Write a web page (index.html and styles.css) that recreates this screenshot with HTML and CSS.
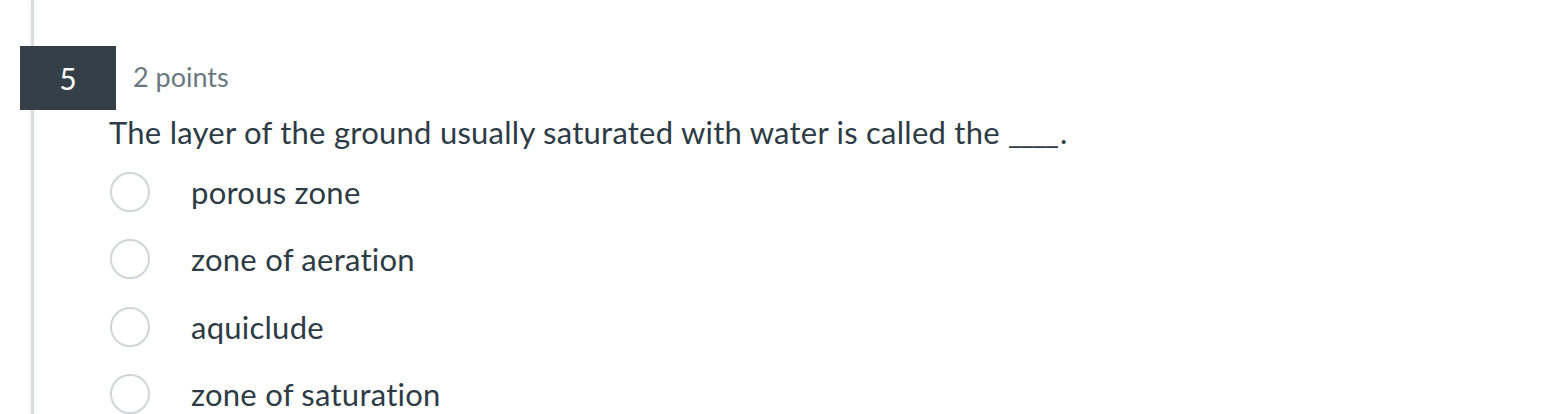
FILE: index.html
```html
<!DOCTYPE html>
<html lang="en">
<head>
<meta charset="utf-8">
<title>Quiz question 5</title>
<link rel="stylesheet" href="styles.css">
</head>
<body>
<div class="quiz">
  <div class="question">
    <div class="header">
      <div class="badge">5</div>
      <div class="points">2 points</div>
    </div>
    <div class="text">The layer of the ground usually saturated with water is called the <span class="blank">____</span>.</div>
    <ul class="answers">
      <li class="answer"><span class="radio"></span><span class="label">porous zone</span></li>
      <li class="answer"><span class="radio"></span><span class="label">zone of aeration</span></li>
      <li class="answer"><span class="radio"></span><span class="label">aquiclude</span></li>
      <li class="answer"><span class="radio"></span><span class="label">zone of saturation</span></li>
    </ul>
  </div>
</div>
</body>
</html>
```
FILE: styles.css
```css
html, body {
  margin: 0;
  padding: 0;
  background: #ffffff;
  height: 100%;
  overflow: hidden;
}
body {
  font-family: Lato, "Open Sans", sans-serif;
  color: #2d3b45;
  font-variant-ligatures: none;
}
.quiz {
  margin-left: 31px;
  border-left: 3px solid #d9dcdf;
  min-height: 414px;
  padding-top: 46px;
  box-sizing: border-box;
  box-shadow: -2px 0 3px rgba(0,0,0,0.04);
}
.header {
  display: flex;
  align-items: center;
  margin-left: -14px;
}
.badge {
  width: 96px;
  height: 64px;
  background: #343f48;
  color: #ffffff;
  font-size: 30px;
  display: flex;
  align-items: center;
  justify-content: center;
}
.points {
  padding-left: 17px;
  padding-bottom: 4px;
  font-size: 27px;
  color: #6b7780;
}
.text {
  margin-left: 75px;
  margin-top: 2px;
  font-size: 31px;
  line-height: 40px;
  letter-spacing: 0.25px;
}
.blank {
  letter-spacing: -2px;
  margin-left: 0;
  margin-right: 3px;
}
.answers {
  list-style: none;
  margin: 6px 0 0 76px;
  padding: 0;
}
.answer {
  display: flex;
  align-items: center;
  height: 67.5px;
}
.radio {
  width: 36px;
  height: 36px;
  border: 2px solid #d0d5d9;
  border-radius: 50%;
  flex: none;
}
.label {
  margin-left: 41px;
  font-size: 31px;
  letter-spacing: 0.25px;
}
```
